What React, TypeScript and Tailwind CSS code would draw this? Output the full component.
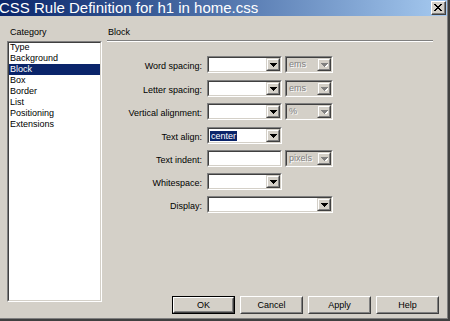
import React from "react";

function Sunken({ className, inner, children }: { className: string; inner: string; children?: React.ReactNode }) {
  return (
    <div className={`border border-t-[#808080] border-l-[#808080] border-b-white border-r-white ${className}`}>
      <div className={`h-full border border-t-[#404040] border-l-[#404040] border-b-[#d4d0c8] border-r-[#d4d0c8] flex ${inner}`}>
        {children}
      </div>
    </div>
  );
}

function ArrowBtn({ disabled }: { disabled?: boolean }) {
  return (
    <div className="w-[14px] h-full shrink-0 border border-t-[#d4d0c8] border-l-[#d4d0c8] border-b-[#404040] border-r-[#404040] bg-[#d4d0c8]">
      <div className="h-full border border-t-white border-l-white border-b-[#808080] border-r-[#808080] flex items-center justify-center">
        <svg width="7" height="4" viewBox="0 0 7 4" shapeRendering="crispEdges">
          {disabled && <polygon points="1,1 8,1 4.5,5" fill="#ffffff" />}
          <polygon points="0,0 7,0 3.5,4" fill={disabled ? "#808080" : "#000000"} />
        </svg>
      </div>
    </div>
  );
}

function Combo({ w, children }: { w: string; children?: React.ReactNode }) {
  return (
    <Sunken className={`${w} h-[17px]`} inner="bg-white">
      <div className="flex-1 flex items-center min-w-0">{children}</div>
      <ArrowBtn />
    </Sunken>
  );
}

function Unit({ text }: { text: string }) {
  return (
    <Sunken className="w-[48px] h-[17px] ml-[3px]" inner="bg-[#d4d0c8]">
      <div className="flex-1 flex items-center pl-[2px] text-[#808080] [text-shadow:1px_1px_0_#ffffff]">{text}</div>
      <ArrowBtn disabled />
    </Sunken>
  );
}

function Row({ label, mt, children }: { label: string; mt: string; children: React.ReactNode }) {
  return (
    <div className={`flex items-center h-[17px] ${mt}`}>
      <div className="w-[100px] pr-[5px] text-right leading-[12px] pt-[2px]">{label}</div>
      {children}
    </div>
  );
}

function Btn({ label, def }: { label: string; def?: boolean }) {
  const face = (
    <div className="h-full border border-t-white border-l-white border-b-[#404040] border-r-[#404040]">
      <div className="h-full border border-t-[#d4d0c8] border-l-[#d4d0c8] border-b-[#808080] border-r-[#808080] flex items-center justify-center leading-[12px]">
        {label}
      </div>
    </div>
  );
  return (
    <div className={`w-[63px] h-[18px] bg-[#d4d0c8] ${def ? "border border-black" : ""}`}>{face}</div>
  );
}

const categories = ["Type", "Background", "Block", "Box", "Border", "List", "Positioning", "Extensions"];

export default function App() {
  return (
    <div className="w-[450px] h-[321px] bg-[#d4d0c8] border-r-2 border-b-2 border-r-[#404040] border-b-[#404040] font-['Liberation_Sans',Arial,sans-serif] text-[9px] text-black overflow-hidden">
      <div className="h-full border-r border-b border-r-[#808080] border-b-[#808080] flex flex-col">
        {/* Title bar */}
        <div className="h-[16px] shrink-0 flex items-center bg-gradient-to-r from-[#0a246a] to-[#a6caf0]">
          <div className="flex-1 text-white text-[15px] leading-[16px] whitespace-nowrap -ml-[1px]">
            CSS Rule Definition for h1 in home.css
          </div>
          <div className="w-[15px] h-[14px] mr-[1px] bg-[#d4d0c8] border border-t-white border-l-white border-b-[#404040] border-r-[#404040]">
            <div className="h-full border-b border-r border-b-[#808080] border-r-[#808080] flex items-center justify-center">
              <svg width="8" height="7" viewBox="0 0 8 7" shapeRendering="crispEdges">
                <path d="M0 0h2l2 2.5L6 0h2L5 3.5 8 7H6L4 4.5 2 7H0l3-3.5z" fill="#000" />
              </svg>
            </div>
          </div>
        </div>

        {/* Body */}
        <div className="flex-1 flex">
          {/* Left column */}
          <div className="pl-[7px] w-[102px] shrink-0 flex flex-col">
            <div className="h-[25px] pt-[10px] pl-[3px] leading-[12px]">Category</div>
            <Sunken className="w-[95px] h-[261px]" inner="bg-white flex-col">
              <div className="-mt-[1px]">
                {categories.map((c) => (
                  <div
                    key={c}
                    className={`h-[11px] leading-[11px] pl-[1px] ${c === "Block" ? "bg-[#0a246a] text-white" : ""}`}
                  >
                    {c}
                  </div>
                ))}
              </div>
            </Sunken>
          </div>

          {/* Right column */}
          <div className="flex-1 pl-[5px] pr-[8px] flex flex-col">
            <div className="h-[24px] pt-[10px] pl-[1px] leading-[12px]">Block</div>
            <div className="h-[1px] bg-[#808080] mr-[6px]" />
            <div className="h-[1px] bg-white mr-[6px]" />
            <div className="flex flex-col mt-[14px]">
              <Row label="Word spacing:" mt="mt-0">
                <Combo w="w-[75px]" />
                <Unit text="ems" />
              </Row>
              <Row label="Letter spacing:" mt="mt-[7px]">
                <Combo w="w-[75px]" />
                <Unit text="ems" />
              </Row>
              <Row label="Vertical alignment:" mt="mt-[6px]">
                <Combo w="w-[75px]" />
                <Unit text="%" />
              </Row>
              <Row label="Text align:" mt="mt-[7px]">
                <Combo w="w-[75px]">
                  <span className="ml-[1px] px-[1px] bg-[#0a246a] text-white leading-[10px]">center</span>
                </Combo>
              </Row>
              <Row label="Text indent:" mt="mt-[6px]">
                <Sunken className="w-[75px] h-[17px]" inner="bg-white" />
                <Unit text="pixels" />
              </Row>
              <Row label="Whitespace:" mt="mt-[6px]">
                <Combo w="w-[75px]" />
              </Row>
              <Row label="Display:" mt="mt-[6px]">
                <Combo w="w-[126px]" />
              </Row>
            </div>
            <div className="flex-1" />
            <div className="flex justify-end gap-[5px] mb-[4px]">
              <Btn label="OK" def />
              <Btn label="Cancel" />
              <Btn label="Apply" />
              <Btn label="Help" />
            </div>
          </div>
        </div>
      </div>
    </div>
  );
}
